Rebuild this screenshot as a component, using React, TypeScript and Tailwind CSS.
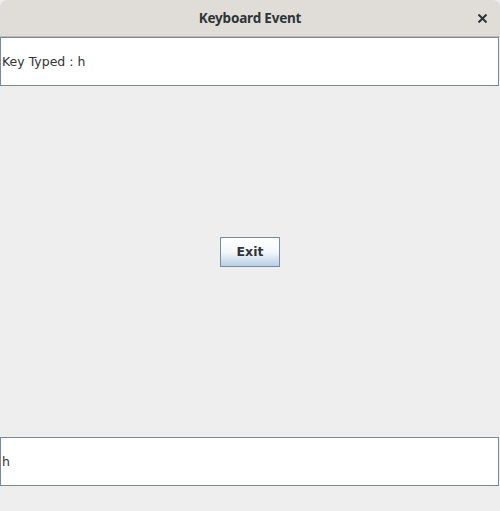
import React from 'react';

const font = { fontFamily: '"DejaVu Sans", "Noto Sans", sans-serif' };

export default function App() {
  return (
    <div className="w-[500px] h-[511px] bg-[#eeeeee] flex flex-col overflow-hidden" style={font}>
      {/* title bar */}
      <div className="h-[37px] shrink-0 bg-[#e0ddd9] border-b border-[#bfb9b2] rounded-t-[7px] flex items-center relative">
        <div className="flex-1 text-center text-[13.5px] font-bold text-[#2e3436] font-['Noto_Sans',sans-serif] tracking-[-0.2px]">
          Keyboard Event
        </div>
        <div className="absolute right-[10px] top-[10px] w-[16px] h-[16px] flex items-center justify-center">
          <svg width="9" height="9" viewBox="0 0 9 9">
            <path d="M1.2 1.2 L7.8 7.8 M7.8 1.2 L1.2 7.8" stroke="#2e3436" strokeWidth="2" strokeLinecap="square" />
          </svg>
        </div>
      </div>

      {/* top text field */}
      <div className="h-[49px] w-[499px] shrink-0 bg-white border border-[#7a8a99] flex items-center pl-[1px] pt-[2px]">
        <span className="text-[12.5px] text-[#333333]">Key Typed : h</span>
      </div>

      {/* center */}
      <div className="h-[351px] shrink-0 flex justify-center pt-[151px]">
        <button className="w-[60px] h-[30px] border border-[#7a8a99] bg-gradient-to-b from-[#ffffff] via-[#f4f8fc] to-[#b8cfe5] text-[12.5px] font-bold text-[#333333] pt-[1px]">
          Exit
        </button>
      </div>

      {/* bottom text field */}
      <div className="h-[49px] w-[499px] shrink-0 bg-white border border-[#7a8a99] flex items-center pl-[1px] pt-[1px]">
        <span className="text-[12.5px] text-[#333333]">h</span>
      </div>
    </div>
  );
}
